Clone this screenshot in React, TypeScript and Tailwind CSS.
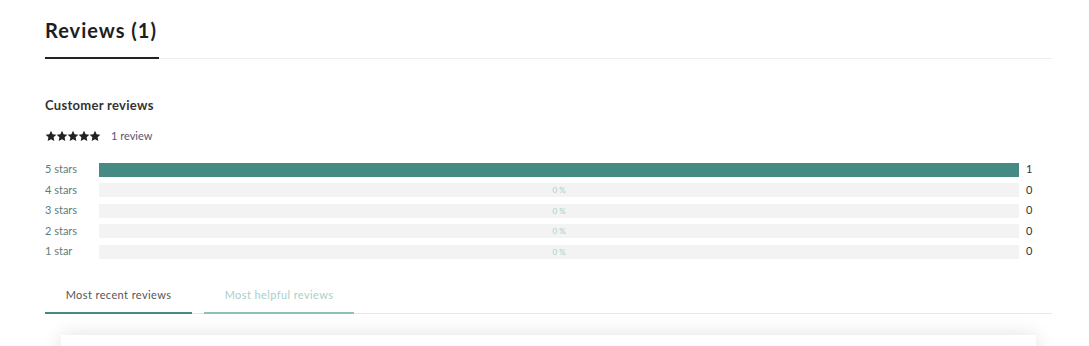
const ROWS = [
  { label: "5 stars", count: 1 },
  { label: "4 stars", count: 0 },
  { label: "3 stars", count: 0 },
  { label: "2 stars", count: 0 },
  { label: "1 star", count: 0 },
];

function Star() {
  return (
    <svg viewBox="0 0 24 24" className="h-[12px] w-[12px] -mr-[1px]" fill="#222">
      <path d="M12 1.5l3.2 6.9 7.5.9-5.5 5.2 1.4 7.5L12 18.3 5.4 22l1.4-7.5L1.3 9.3l7.5-.9z" />
    </svg>
  );
}

export default function App() {
  return (
    <div className="min-h-screen bg-white font-['Lato','Open_Sans',sans-serif] text-[#333]">
      <div className="mx-[45px] w-[1007px] pt-[15px]">
        <div className="border-b border-[#ececec]">
          <h2 className="inline-block border-b-2 border-[#222] pb-[12px] text-[20px] font-bold leading-[30px] tracking-[1px] text-[#1e1e1e] -mb-[1px] pr-[2px]">
            Reviews (1)
          </h2>
        </div>

        <h3 className="mt-[36px] text-[13px] font-bold leading-[20px] tracking-[0.3px] text-[#333]">Customer reviews</h3>

        <div className="mt-[13px] flex items-center gap-[11px]">
          <div className="flex">
            <Star /><Star /><Star /><Star /><Star />
          </div>
          <span className="text-[11px] text-[#5a5670]">1 review</span>
        </div>

        <div className="mt-[18px] flex flex-col gap-[6.5px] w-[994px]">
          {ROWS.map((r) => (
            <div key={r.label} className="flex items-center h-[14px]">
              <span className="w-[54px] text-[11px] text-[#5f7c7a]">{r.label}</span>
              <div className="relative flex-1 h-[14px] bg-[#f3f3f3]">
                {r.count > 0 ? (
                  <div className="h-full w-full bg-[#458b83]" />
                ) : (
                  <span className="absolute inset-0 flex items-center justify-center text-[8px] text-[#a9cfc8]">0 %</span>
                )}
              </div>
              <span className="w-[20px] pl-[7px] text-[11px] text-[#333]">{r.count}</span>
            </div>
          ))}
        </div>

        <div className="mt-[27px] flex border-b border-[#e8e8e8]">
          <div className="w-[147px] border-b-2 border-[#458b83] -mb-[1px] pb-[8px] text-center text-[11px] leading-[18px] tracking-[0.4px] text-[#555]">
            Most recent reviews
          </div>
          <div className="ml-[12px] w-[150px] border-b-2 border-[#8fbfb7] -mb-[1px] pb-[8px] text-center text-[11px] leading-[18px] tracking-[0.4px] text-[#a9cfc8]">
            Most helpful reviews
          </div>
        </div>

        <div className="mx-[16px] mt-[21px] h-[40px] bg-white shadow-[0_0_20px_rgba(0,0,0,0.12)]" />
      </div>
    </div>
  );
}
